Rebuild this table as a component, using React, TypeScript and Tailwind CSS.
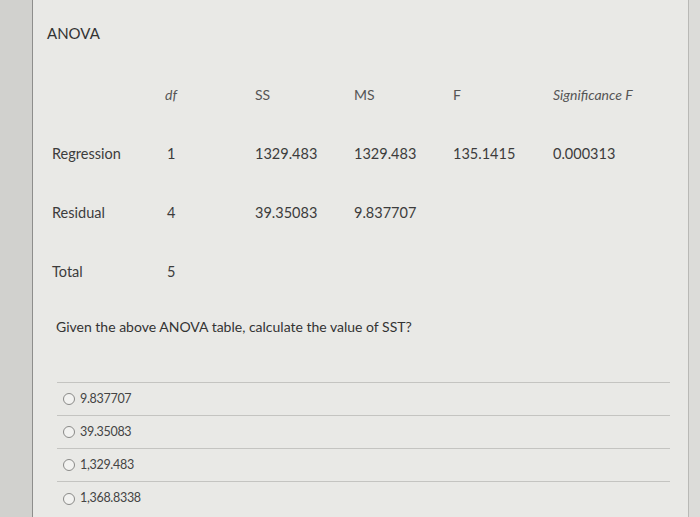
const rows = [
  { label: 'Regression', df: '1', ss: '1329.483', ms: '1329.483', f: '135.1415', sig: '0.000313' },
  { label: 'Residual', df: '4', ss: '39.35083', ms: '9.837707', f: '', sig: '' },
  { label: 'Total', df: '5', ss: '', ms: '', f: '', sig: '' },
];

const options = ['9.837707', '39.35083', '1,329.483', '1,368.8338'];

const cols = 'grid grid-cols-[113px_90px_99px_99px_100px_1fr] items-center';

export default function App() {
  return (
    <div className="flex h-[517px] w-[700px] overflow-hidden bg-[#d3d3d0] font-['Lato','Liberation_Sans',sans-serif] text-[#3c3c3c]">
      <div className="w-[33px] shrink-0 border-r border-[#8e8e8c] bg-[#d1d1ce]" />
      <div className="flex w-[656px] shrink-0 flex-col border-r border-[#b9b9b6] bg-[#e9e9e6]">
        <div className="pl-[14px] pt-[24px] text-[15px] leading-[18px] text-[#333]">ANOVA</div>

        <div className="mt-[42px] pl-[19px]">
          <div className={`${cols} h-[18px] text-[14px] text-[#555]`}>
            <span />
            <span className="italic">df</span>
            <span>SS</span>
            <span>MS</span>
            <span>F</span>
            <span className="italic">Significance F</span>
          </div>
          {rows.map((r) => (
            <div key={r.label} className={`${cols} mt-[41px] h-[18px] text-[14.5px]`}>
              <span>{r.label}</span>
              <span className="pl-[2px]">{r.df}</span>
              <span>{r.ss}</span>
              <span>{r.ms}</span>
              <span>{r.f}</span>
              <span>{r.sig}</span>
            </div>
          ))}
        </div>

        <p className="mt-[39px] pl-[23px] text-[14px] leading-[18px] text-[#333]">
          Given the above ANOVA table, calculate the value of SST?
        </p>

        <div className="mt-[46px] ml-[24px] mr-[18px] border-t border-[#c4c4c1]">
          {options.map((o, i) => (
            <label
              key={o}
              className={`flex h-[33px] items-center gap-[5px] pl-[6px] ${
                i < options.length - 1 ? 'border-b border-[#c4c4c1]' : ''
              }`}
            >
              <span className="h-[12px] w-[12px] rounded-full border border-[#8a8a88] bg-[#f2f2f0]" />
              <span className="text-[12.5px] tracking-[-0.3px] text-[#444]">{o}</span>
            </label>
          ))}
        </div>
      </div>
      <div className="flex-1 bg-[#dcdcd9]" />
    </div>
  );
}
